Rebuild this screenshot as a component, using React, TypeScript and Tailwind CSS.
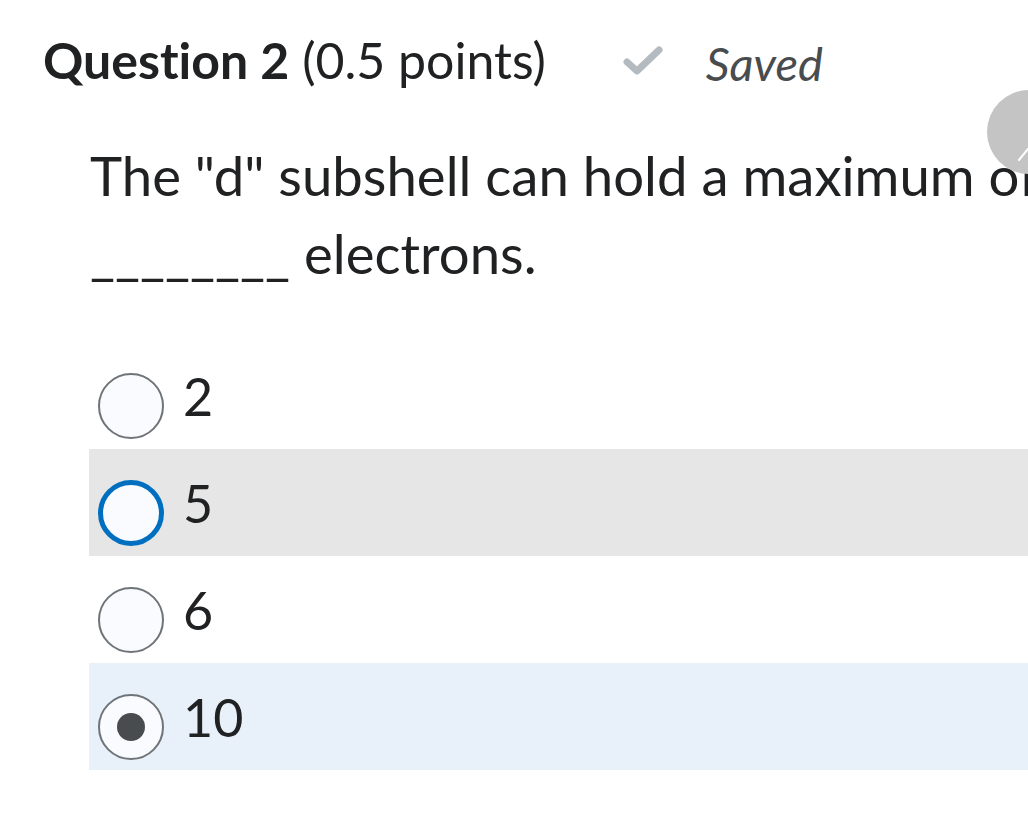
import React from "react";

function Radio({ state }: { state: "empty" | "focus" | "checked" }) {
  if (state === "focus") {
    return (
      <div className="mt-[20px] h-[66px] w-[66px] shrink-0 rounded-full border-[5px] border-[#006fbf] bg-[#f9fbff]" />
    );
  }
  return (
    <div className="mt-[20px] flex h-[66px] w-[66px] shrink-0 items-center justify-center rounded-full border-2 border-[#6e7477] bg-[#f9fbff]">
      {state === "checked" && <div className="h-[28px] w-[28px] rounded-full bg-[#494c4e]" />}
    </div>
  );
}

function Option({ label, state, bg }: { label: string; state: "empty" | "focus" | "checked"; bg: string }) {
  return (
    <div className={`flex h-[107px] items-center gap-[19px] pl-[9px] ${bg}`}>
      <Radio state={state} />
      <span className="text-[52px] leading-[60px] text-[#202122]">{label}</span>
    </div>
  );
}

export default function App() {
  return (
    <div className="relative h-[834px] w-[1028px] overflow-hidden bg-white font-['Lato',sans-serif] text-[#202122] [font-variant-ligatures:none]">
      <div className="flex items-center pl-[43px] pt-[28px]">
        <h1 className="whitespace-nowrap text-[50px] leading-[60px]">
          <span className="font-bold">Question 2</span> (0.5 points)
        </h1>
        <svg className="ml-[77px] mt-[2px] shrink-0" width="40" height="30" viewBox="0 0 40 30">
          <path d="M4 16 L14 25 L36 4" fill="none" stroke="#b3bac0" strokeWidth="7" strokeLinecap="round" strokeLinejoin="round" />
        </svg>
        <span className="ml-[43px] mt-[6px] whitespace-nowrap text-[47px] italic leading-[58px] text-[#494c4e]">Saved</span>
      </div>

      <div className="ml-[90px] mt-[44px] w-[1100px]">
        <p className="text-[54.5px] leading-[78px]">
          The "d" subshell can hold a maximum of ________ electrons.
        </p>
        <div className="-ml-[1px] mt-[50px] w-[1100px]">
          <Option label="2" state="empty" bg="bg-white" />
          <Option label="5" state="focus" bg="bg-[#e6e6e6]" />
          <Option label="6" state="empty" bg="bg-white" />
          <Option label="10" state="checked" bg="bg-[#e8f1fa]" />
        </div>
      </div>

      <div className="absolute left-[987px] top-[90px] h-[84px] w-[84px] rounded-full bg-[#c4c4c4]">
        <svg className="absolute left-[30px] top-[56px]" width="14" height="16" viewBox="0 0 14 16">
          <path d="M2 14 L11 3" stroke="#ffffff" strokeWidth="2" strokeLinecap="round" />
        </svg>
      </div>
    </div>
  );
}
